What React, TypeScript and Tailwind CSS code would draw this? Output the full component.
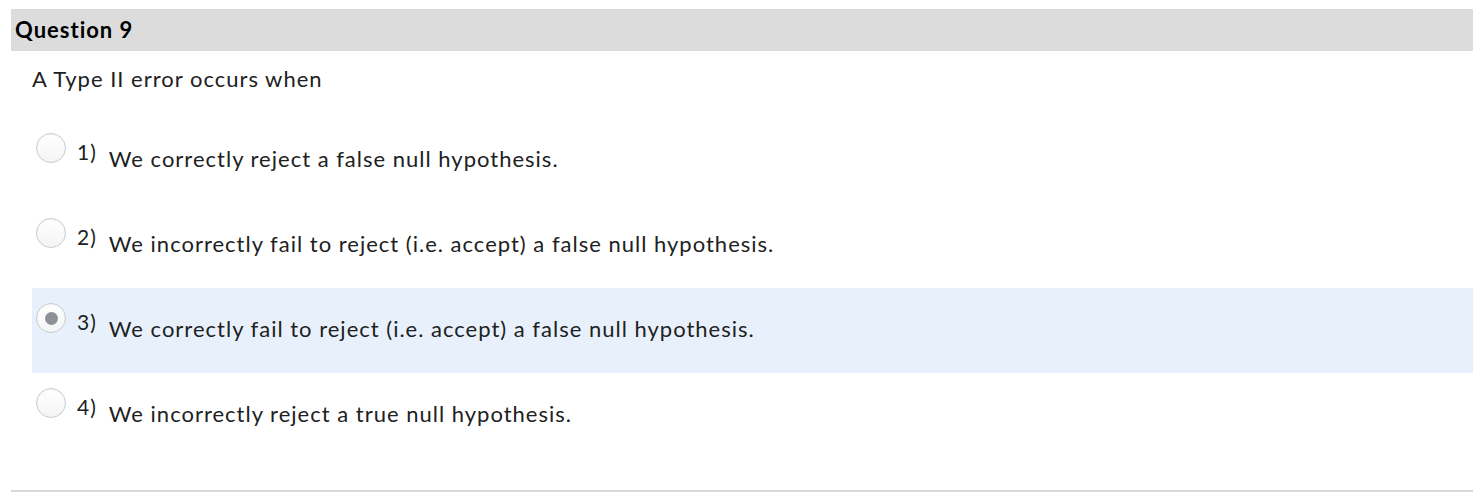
import React from "react";

const options = [
  { n: "1)", t: "We correctly reject a false null hypothesis.", checked: false },
  { n: "2)", t: "We incorrectly fail to reject (i.e. accept) a false null hypothesis.", checked: false },
  { n: "3)", t: "We correctly fail to reject (i.e. accept) a false null hypothesis.", checked: true },
  { n: "4)", t: "We incorrectly reject a true null hypothesis.", checked: false },
];

function Radio({ checked }: { checked: boolean }) {
  return (
    <div className="w-[30px] h-[30px] rounded-full border border-[#c9cbce] bg-gradient-to-b from-white to-[#f3f4f5] flex items-center justify-center shrink-0 shadow-[inset_0_1px_2px_rgba(0,0,0,0.04)]">
      {checked && <div className="w-[13px] h-[13px] rounded-full bg-[#8d9096]" />}
    </div>
  );
}

export default function App() {
  return (
    <div
      className="bg-white w-[1477px] h-[493px] pt-[9px] pl-[11px] pr-[4px] text-[#202122] tracking-[1px] [font-variant-ligatures:none]"
      style={{ fontFamily: "Lato, 'Open Sans', sans-serif" }}
    >
      <div className="h-[42px] bg-[#dcdcdc] flex items-center pl-[4px]">
        <h2 className="text-[22px] font-bold text-black leading-none">Question 9</h2>
      </div>
      <div className="pl-[21px]">
        <p className="text-[22px] leading-[28px] mt-[14px] mb-[25px]">A Type II error occurs when</p>
        <div className="flex flex-col">
          {options.map((o) => (
            <div key={o.n} className={`h-[85px] flex items-start pl-[4px] pt-[15px] ${o.checked ? "bg-[#e8f1fb]" : ""}`}>
              <Radio checked={o.checked} />
              <span className="ml-[11px] text-[21px] leading-[24px] mt-[7px]">{o.n}</span>
              <span className="ml-[12px] text-[22px] leading-[28px] mt-[12px]">{o.t}</span>
            </div>
          ))}
        </div>
      </div>
      <div className="mt-[32px] h-[2px] bg-[#d9d9d9]" />
    </div>
  );
}
